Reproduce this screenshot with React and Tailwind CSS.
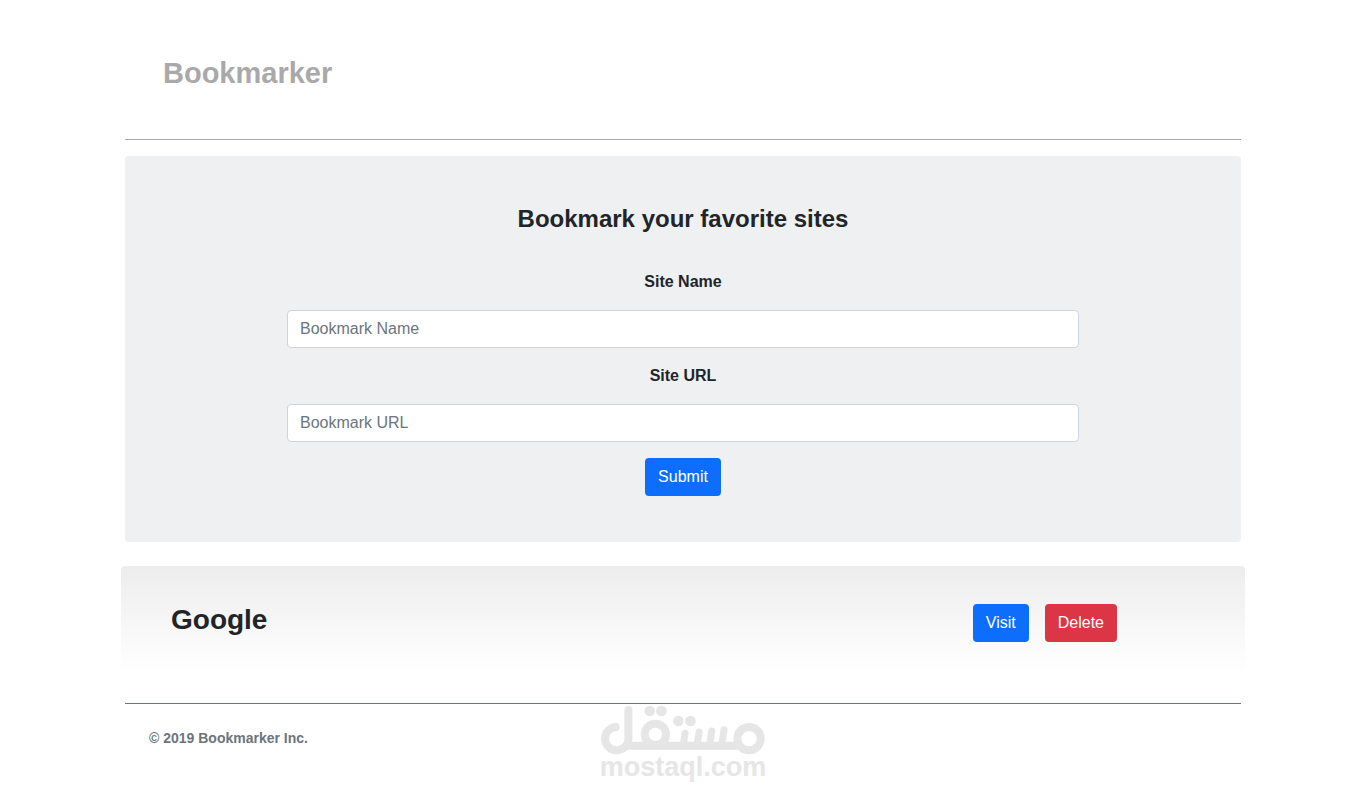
import React, { useState } from "react";

const INITIAL_BOOKMARKS = [{ name: "Google", url: "https://www.google.com" }];

function Field({ id, label, placeholder, value, onChange }) {
  return (
    <div className="mb-4 flex flex-col gap-4">
      <label htmlFor={id} className="text-center font-bold">
        {label}
      </label>
      <input
        id={id}
        type="text"
        placeholder={placeholder}
        value={value}
        onChange={(e) => onChange(e.target.value)}
        className="w-full rounded border border-[#ced4da] bg-white px-3 py-1.5 h-[38px] placeholder:text-[#6c757d]"
      />
    </div>
  );
}

function BookmarkCard({ bookmark, onDelete }) {
  return (
    <div className="-mx-1 flex items-start justify-between rounded bg-linear-to-b from-[#ededed] to-white to-95% pt-[38px] pb-9 pl-[50px] pr-32">
      <h3 className="text-[28px] leading-8 font-bold">{bookmark.name}</h3>
      <div className="flex gap-4">
        <a href={bookmark.url} className="rounded bg-[#0d6efd] px-[13px] py-[7px] text-white">
          Visit
        </a>
        <button type="button" onClick={onDelete} className="rounded bg-[#dc3545] px-[13px] py-[7px] text-white">
          Delete
        </button>
      </div>
    </div>
  );
}

function MostaqlLogo() {
  return (
    <div className="absolute left-1/2 top-0 -translate-x-1/2 flex flex-col items-center text-[#e6e6e6]">
      <svg width="166" height="52" viewBox="30 24 498 156" fill="none" stroke="currentColor" strokeWidth="24" strokeLinecap="round">
        {/* lam */}
        <path d="M78 93a35 35 0 1 0 38 36V42" />
        {/* base line */}
        <path d="M117 149H446" />
        {/* qaf and meem */}
        <circle cx="197" cy="115" r="32" />
        <circle cx="478" cy="128" r="35" />
        {/* teeth */}
        <path d="M286 112L281 146M328 108L322 146M366 105L360 146M403 101L396 146" strokeWidth="21" />
        <g fill="currentColor" stroke="none">
          <circle cx="180" cy="45" r="16" />
          <circle cx="215" cy="45" r="16" />
          <circle cx="266" cy="75" r="16" />
          <circle cx="302" cy="75" r="16" />
        </g>
      </svg>
      <span className="text-[27px] leading-[22px] font-bold">mostaql.com</span>
    </div>
  );
}

export default function App() {
  const [bookmarks, setBookmarks] = useState(INITIAL_BOOKMARKS);
  const [name, setName] = useState("");
  const [url, setUrl] = useState("");

  const handleSubmit = (e) => {
    e.preventDefault();
    if (!name || !url) return;
    setBookmarks([...bookmarks, { name, url }]);
    setName("");
    setUrl("");
  };

  const handleDelete = (index) => {
    setBookmarks(bookmarks.filter((_, i) => i !== index));
  };

  return (
    <div className="mx-auto max-w-[1140px] px-3 font-['Liberation_Sans',Arial,sans-serif] text-base text-[#212529]">
      {/* header */}
      <header className="border-b border-[#a9a9a9] px-[38px] pt-[55px] pb-12">
        <h1 className="text-[29px] leading-9 font-bold text-[#a9a9a9]">Bookmarker</h1>
      </header>

      {/* form */}
      <main>
        <section className="mt-4 rounded bg-[#eff0f2] px-12 pt-12 pb-[46px]">
          <h2 className="mb-9 text-center text-2xl leading-[30px] font-bold">Bookmark your favorite sites</h2>
          <form onSubmit={handleSubmit} className="mx-auto w-4/5 px-3 text-center">
            <Field id="siteName" label="Site Name" placeholder="Bookmark Name" value={name} onChange={setName} />
            <Field id="siteUrl" label="Site URL" placeholder="Bookmark URL" value={url} onChange={setUrl} />
            <button type="submit" className="rounded bg-[#0d6efd] px-[13px] py-[7px] text-white">
              Submit
            </button>
          </form>
        </section>

        {/* saved bookmarks */}
        <section className="mt-6 flex flex-col gap-4">
          {bookmarks.map((b, i) => (
            <BookmarkCard key={i} bookmark={b} onDelete={() => handleDelete(i)} />
          ))}
        </section>
      </main>

      <footer className="relative mt-[25px] border-t border-[#6c757d] px-6 pt-6 pb-12">
        <p className="text-sm font-bold text-[#6c757d]">© 2019 Bookmarker Inc.</p>
        <MostaqlLogo />
      </footer>
    </div>
  );
}
